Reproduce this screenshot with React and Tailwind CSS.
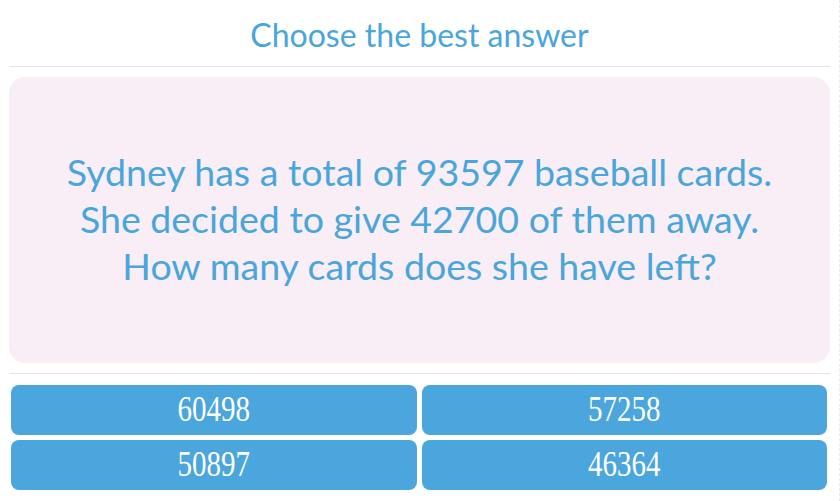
import React from "react";

const answers = ["60498", "57258", "50897", "46364"];

export default function App() {
  return (
    <div className="h-[501px] w-[840px] overflow-hidden bg-white border-r border-dashed border-[#ececf0]">
      <div className="flex w-[821px] ml-[9px] flex-col">
        <h1
          className="flex h-[67px] items-center justify-center border-b border-[#e3e3ea] text-[32px] text-[#48a6dc] pt-[4px]"
          style={{ fontFamily: "Lato, 'Noto Sans', sans-serif" }}
        >
          Choose the best answer
        </h1>
        <div className="pt-[10px] pb-[10px] border-b border-[#e3e3ea]">
          <div
            className="flex h-[286px] flex-col items-center justify-center rounded-[16px] bg-[#f9eef5] text-center text-[37.5px] leading-[47px] text-[#48a6dc] pb-[4px]"
            style={{ fontFamily: "Lato, 'Noto Sans', sans-serif" }}
          >
            <p>Sydney has a total of 93597 baseball cards.</p>
            <p>She decided to give 42700 of them away.</p>
            <p>How many cards does she have left?</p>
          </div>
        </div>
        <div className="grid grid-cols-2 gap-x-[5px] gap-y-[5px] pt-[11px] pl-[2px] pr-[3px]">
          {answers.map((a) => (
            <button
              key={a}
              className="flex h-[50px] items-center justify-center rounded-[8px] bg-[#4aa6dc] text-[29px] text-white"
              style={{ fontFamily: "'Liberation Serif', serif" }}
            >
              <span className="inline-block scale-y-[1.22]">{a}</span>
            </button>
          ))}
        </div>
      </div>
    </div>
  );
}
